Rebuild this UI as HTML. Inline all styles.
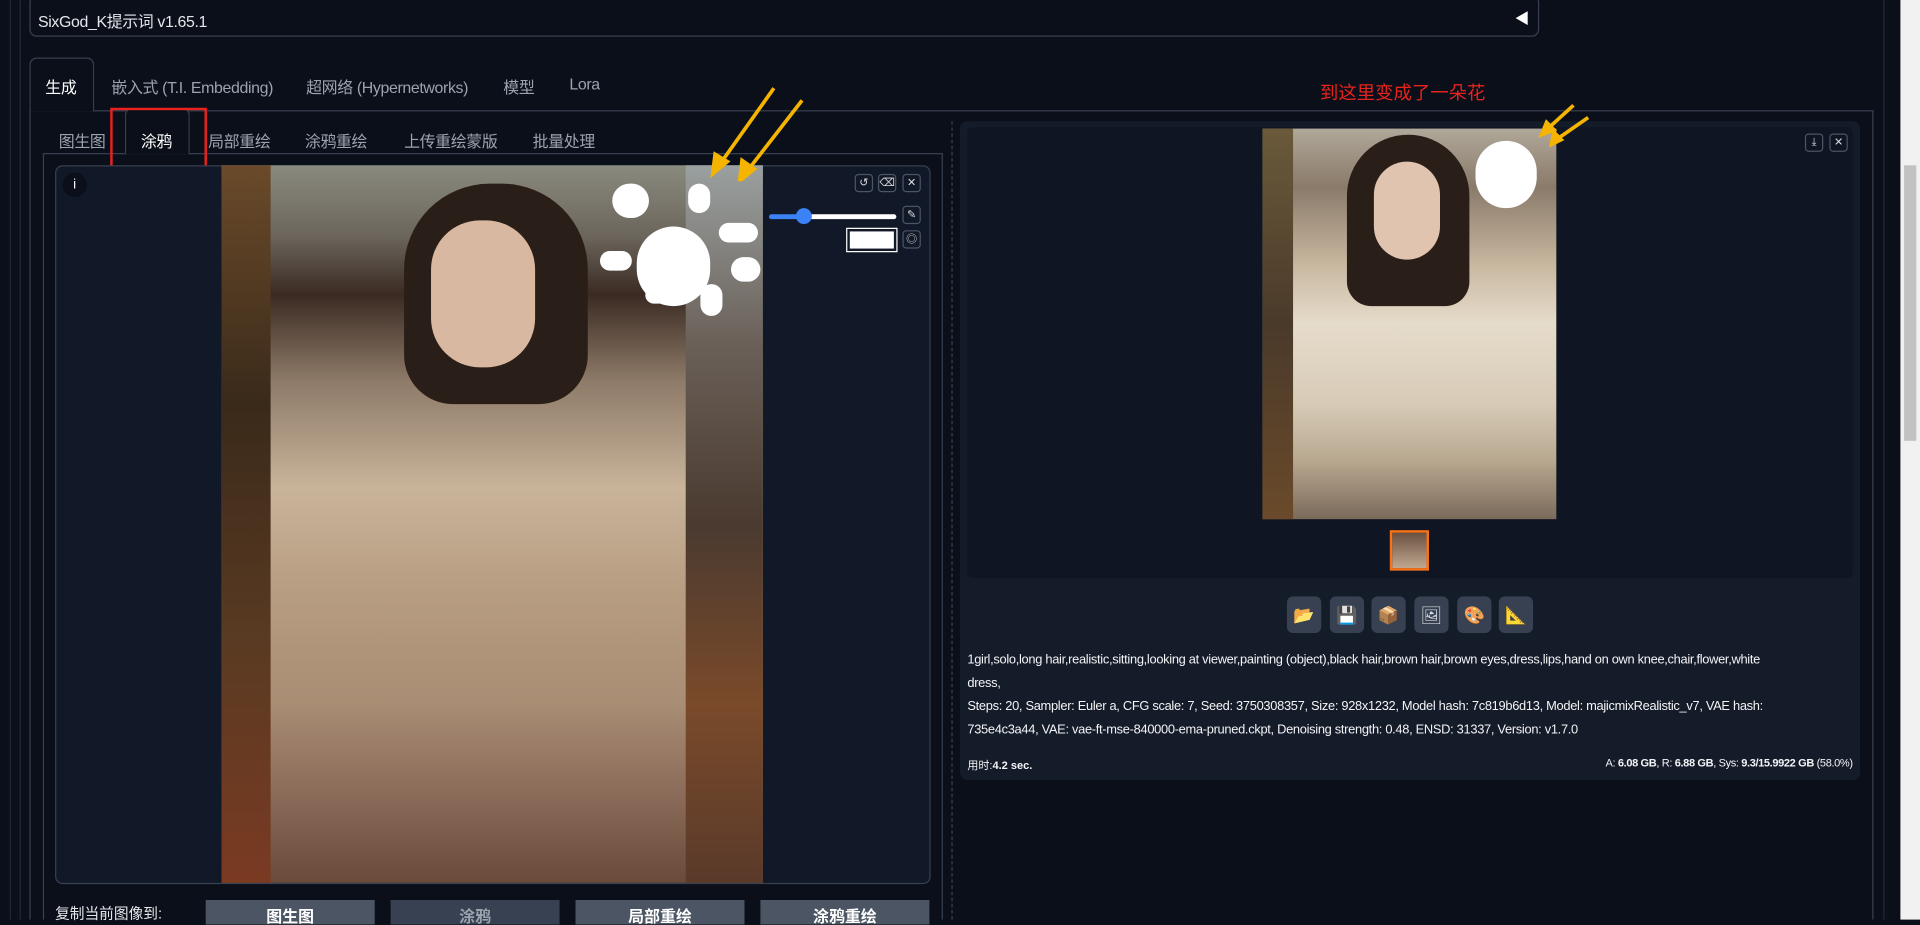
<!DOCTYPE html>
<html><head><meta charset="utf-8"><style>
*{box-sizing:border-box;margin:0;padding:0}
html,body{width:1920px;height:919px;overflow:hidden;background:#0b0f19}
#w{position:absolute;left:0;top:0;width:1568px;height:751px;transform:scale(1.22449);transform-origin:0 0;font-family:"Liberation Sans","Noto Sans CJK SC",sans-serif;color:#d1d5db;font-size:13px}
.a{position:absolute}
.tab{position:absolute;font-size:13px;color:#9ca3af;letter-spacing:-0.3px}
.btn{position:absolute;width:28px;height:30px;background:#374151;border-radius:5px;top:487px;font-size:14px;text-align:center;line-height:30px}
.ib{position:absolute;width:15px;height:15px;border:1px solid #4b5563;border-radius:3px;font-size:9px;color:#ddd;text-align:center;line-height:13px}
.bb{position:absolute;top:735px;height:20px;width:138px;background:#4b5563;color:#fff;font-weight:bold;text-align:center;font-size:13px;line-height:28px;overflow:hidden}
</style></head><body><div id="w">
<div class="a" style="left:8px;top:0;width:1px;height:751px;background:#1f2937"></div>
<div class="a" style="left:16px;top:0;width:1px;height:751px;background:#1f2937"></div>
<div class="a" style="left:1538px;top:0;width:1px;height:751px;background:#1f2937"></div>
<div class="a" style="left:1552px;top:0;width:16px;height:751px;background:#f1f1f1"></div>
<div class="a" style="left:1555px;top:135px;width:10px;height:225px;background:#c1c1c1"></div>
<div class="a" style="left:24px;top:-4px;width:1233px;height:34px;border:1px solid #374151;border-radius:6px;background:#0b0f19"></div>
<div class="a" style="left:31px;top:7px;font-size:13px;color:#e5e7eb;letter-spacing:-0.3px">SixGod_K提示词 v1.65.1</div>
<div class="a" style="left:1237px;top:6px;font-size:12px;color:#fff">◀</div>
<div class="a" style="left:24px;top:90px;width:1506px;height:661px;border:1px solid #374151;border-bottom:none"></div>
<div class="a" style="left:24px;top:47px;width:53px;height:44px;border:1px solid #374151;border-bottom:none;border-radius:6px 6px 0 0;background:#0b0f19"></div>
<div class="tab" style="left:37px;top:61px;color:#fff">生成</div>
<div class="tab" style="left:91px;top:61px">嵌入式 (T.I. Embedding)</div>
<div class="tab" style="left:250px;top:61px">超网络 (Hypernetworks)</div>
<div class="tab" style="left:411px;top:61px">模型</div>
<div class="tab" style="left:465px;top:61px">Lora</div>
<div class="a" style="left:35px;top:125px;width:735px;height:626px;border:1px solid #374151;border-bottom:none"></div>
<div class="a" style="left:102px;top:88px;width:53px;height:38px;border:1px solid #374151;border-bottom:none;border-radius:6px 6px 0 0;background:#0b0f19"></div>
<div class="tab" style="left:48px;top:105px">图生图</div>
<div class="tab" style="left:115px;top:105px;color:#fff">涂鸦</div>
<div class="tab" style="left:170px;top:105px">局部重绘</div>
<div class="tab" style="left:249px;top:105px">涂鸦重绘</div>
<div class="tab" style="left:330px;top:105px">上传重绘蒙版</div>
<div class="tab" style="left:435px;top:105px">批量处理</div>
<div class="a" style="left:90px;top:88px;width:79px;height:50px;border:2px solid #e8231d"></div>
<div class="a" style="left:45px;top:135px;width:715px;height:587px;border:1px solid #374151;border-radius:6px;background:#111827"></div>
<div class="a" style="left:51px;top:141px;width:20px;height:20px;border-radius:10px;background:#0b0f19;color:#fff;font-size:11px;text-align:center;line-height:20px">i</div>
<div class="a" style="left:181px;top:135px;width:442px;height:586px;background:linear-gradient(180deg,#8a8a7e 0%,#6b655c 10%,#3a2a22 18%,#8d7a68 30%,#c9b49a 45%,#b69c80 60%,#a98d74 75%,#8a6a58 88%,#6a4a3a 100%)"></div>
<div class="a" style="left:181px;top:135px;width:40px;height:586px;background:linear-gradient(180deg,#6a4a2a,#3a2a1a,#5a3a22,#7a3a22)"></div>
<div class="a" style="left:560px;top:135px;width:63px;height:586px;background:linear-gradient(180deg,#9aa0a0,#6a6058,#4a3a30,#7a4a2a,#5a3a2a)"></div>
<div class="a" style="left:330px;top:150px;width:150px;height:180px;border-radius:70px 70px 40px 40px;background:#2a1e18"></div>
<div class="a" style="left:352px;top:180px;width:85px;height:120px;border-radius:40px;background:#d8b8a0"></div>
<div class="a" style="left:520px;top:185px;width:60px;height:65px;border-radius:30px;background:#fff"></div>
<div class="a" style="left:500px;top:150px;width:30px;height:28px;border-radius:14px;background:#fff"></div>
<div class="a" style="left:562px;top:150px;width:18px;height:24px;border-radius:9px;background:#fff"></div>
<div class="a" style="left:587px;top:182px;width:32px;height:16px;border-radius:8px;background:#fff"></div>
<div class="a" style="left:597px;top:210px;width:24px;height:20px;border-radius:10px;background:#fff"></div>
<div class="a" style="left:572px;top:232px;width:18px;height:26px;border-radius:9px;background:#fff"></div>
<div class="a" style="left:490px;top:205px;width:26px;height:16px;border-radius:8px;background:#fff"></div>
<div class="a" style="left:527px;top:234px;width:18px;height:14px;border-radius:7px;background:#fff"></div>
<div class="ib" style="left:698px;top:142px">↺</div><div class="ib" style="left:717px;top:142px">⌫</div><div class="ib" style="left:737px;top:142px">✕</div>
<div class="a" style="left:628px;top:175px;width:104px;height:4px;border-radius:2px;background:linear-gradient(90deg,#3b82f6 30%,#fff 30%)"></div>
<div class="a" style="left:650px;top:170px;width:13px;height:13px;border-radius:7px;background:#3b82f6"></div>
<div class="ib" style="left:737px;top:168px">✎</div>
<div class="a" style="left:691px;top:186px;width:42px;height:20px;border:1px solid #fff;background:#111827;padding:2px"><div style="width:100%;height:100%;background:#fff"></div></div>
<div class="ib" style="left:737px;top:188px">◎</div>
<svg class="a" style="left:570px;top:68px" width="90" height="80"><g stroke="#f5b400" stroke-width="3" fill="#f5b400"><line x1="62" y1="4" x2="18" y2="66"/><line x1="85" y1="14" x2="40" y2="72"/><polygon points="12,74 14,58 24,64"/><polygon points="34,80 36,63 46,70"/></g></svg>
<div class="a" style="left:45px;top:737px;font-size:12px;color:#e5e7eb">复制当前图像到:</div>
<div class="bb" style="left:168px">图生图</div><div class="bb" style="left:319px;background:#374151;color:#9ca3af">涂鸦</div><div class="bb" style="left:470px">局部重绘</div><div class="bb" style="left:621px">涂鸦重绘</div>
<div class="a" style="left:777px;top:99px;height:652px;border-left:1px dashed #374151"></div>
<div class="a" style="left:1078px;top:65px;font-size:15px;color:#e8231d">到这里变成了一朵花</div>
<div class="a" style="left:784px;top:99px;width:735px;height:538px;border-radius:6px;background:#141b29"></div>
<div class="a" style="left:790px;top:104px;width:723px;height:368px;border-radius:4px;background:#0f1522"></div>
<div class="a" style="left:1031px;top:105px;width:240px;height:319px;background:linear-gradient(180deg,#b0a89a 0%,#8a7a6a 15%,#c8b8a0 35%,#e6dccb 50%,#d8ccb8 70%,#b8a890 85%,#7a6a5a 100%)"></div>
<div class="a" style="left:1031px;top:105px;width:25px;height:319px;background:linear-gradient(180deg,#6a5a3a,#4a3a2a,#6a4a2a)"></div>
<div class="a" style="left:1100px;top:110px;width:100px;height:140px;border-radius:50px 50px 20px 20px;background:#2a1e18"></div>
<div class="a" style="left:1122px;top:132px;width:54px;height:80px;border-radius:27px;background:#e0c4b0"></div>
<div class="a" style="left:1205px;top:115px;width:50px;height:55px;border-radius:25px;background:#fff"></div>
<svg class="a" style="left:1255px;top:84px" width="50" height="40"><g stroke="#f5b400" stroke-width="3" fill="#f5b400"><line x1="30" y1="2" x2="8" y2="22"/><line x1="42" y1="12" x2="16" y2="30"/><polygon points="4,26 8,16 14,22"/><polygon points="12,34 14,24 20,30"/></g></svg>
<div class="ib" style="left:1474px;top:109px">⤓</div><div class="ib" style="left:1494px;top:109px">✕</div>
<div class="a" style="left:1135px;top:433px;width:32px;height:33px;border:2px solid #f97316;background:linear-gradient(#6a5040,#c0a890)"></div>
<div class="btn" style="left:1051px">📂</div><div class="btn" style="left:1086px">💾</div><div class="btn" style="left:1120px">📦</div><div class="btn" style="left:1155px">🖼</div><div class="btn" style="left:1190px">🎨</div><div class="btn" style="left:1224px">📐</div>
<div class="a" style="left:790px;top:530px;width:718px;font-size:10.5px;line-height:19px;color:#f3f4f6;letter-spacing:-0.25px">1girl,solo,long hair,realistic,sitting,looking at viewer,painting (object),black hair,brown hair,brown eyes,dress,lips,hand on own knee,chair,flower,white<br>dress,<br>Steps: 20, Sampler: Euler a, CFG scale: 7, Seed: 3750308357, Size: 928x1232, Model hash: 7c819b6d13, Model: majicmixRealistic_v7, VAE hash:<br>735e4c3a44, VAE: vae-ft-mse-840000-ema-pruned.ckpt, Denoising strength: 0.48, ENSD: 31337, Version: v1.7.0</div>
<div class="a" style="left:790px;top:618px;font-size:9px;color:#f3f4f6">用时:<b>4.2 sec.</b></div>
<div class="a" style="right:55px;top:618px;font-size:9px;color:#f3f4f6;letter-spacing:-0.3px;white-space:nowrap">A: <b>6.08 GB</b>, R: <b>6.88 GB</b>, Sys: <b>9.3/15.9922 GB</b> (58.0%)</div>
</div></body></html>
